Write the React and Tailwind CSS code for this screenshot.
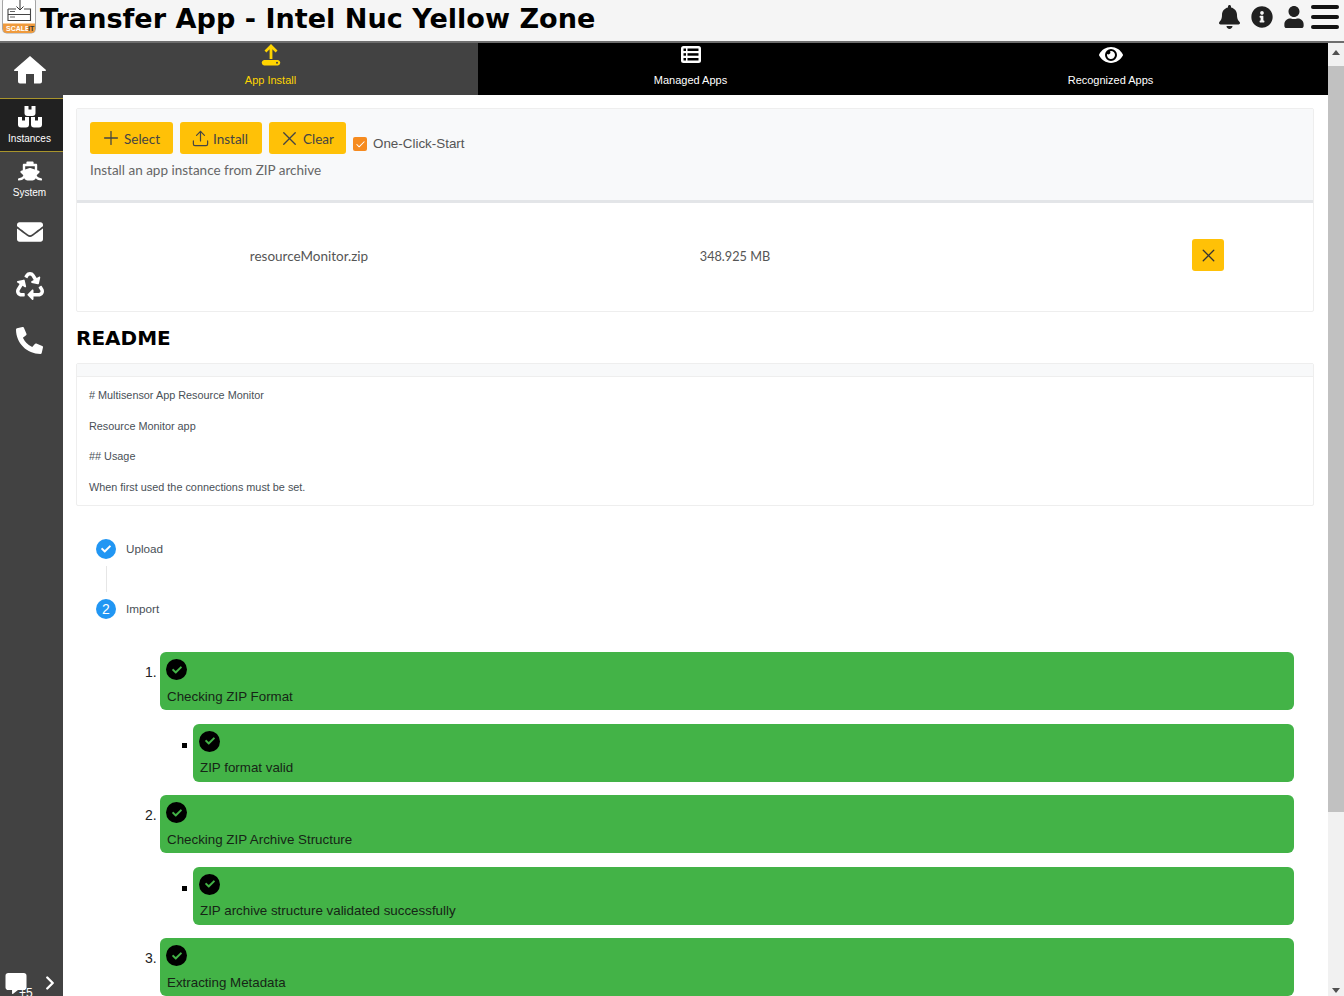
import React from "react";
import { FaShip, FaEnvelope, FaRecycle, FaPhoneAlt, FaBell, FaInfoCircle, FaUser, FaEye, FaCommentAlt, FaCheck } from "react-icons/fa";
import { Plus, Upload, X, ChevronRight, Check } from "lucide-react";

function Logo() {
  return (
    <svg width="34" height="34" viewBox="0 0 34 34" className="shrink-0">
      <rect x="0.5" y="-3" width="33" height="36" rx="4" fill="#fff" stroke="#a5a5a5" />
      <path d="M1 23.500h32V29a4 4 0 0 1-4 4H5a4 4 0 0 1-4-4z" fill="#ef9a3c" />
      <text x="4" y="31" fontSize="7" fontWeight="700" fill="#fff" fontFamily="Liberation Sans">SCALE</text>
      <text x="26" y="31" fontSize="7" fontWeight="700" fill="#333" fontFamily="Liberation Sans">IT</text>
      <path d="M18 0v9.500M14.500 6.500l3.500 3.500 3.500-3.500" fill="none" stroke="#333" strokeWidth="1" />
      <path d="M6 9h8M22 9h6.500v11.500H6V9M6 14.500h22.500" fill="none" stroke="#444" strokeWidth="1.100" />
      <rect x="8" y="11" width="5" height="1" fill="#666" />
      <rect x="8" y="16.500" width="5" height="1" fill="#666" />
    </svg>
  );
}

function TabUpload() {
  return (
    <svg width="20" height="22" viewBox="0 0 20 22" fill="#ffd400">
      <path d="M10 0l6.500 6.500-1.900 1.900-3.200-3.200V15H8.600V5.200L5.400 8.400 3.500 6.500z" />
      <path d="M3 16h14a2.800 2.800 0 0 1 0 5.500H3A2.800 2.800 0 0 1 3 16z" />
      <circle cx="16" cy="18.700" r="1" fill="#424242" />
    </svg>
  );
}

function HomeIcon() {
  return (
    <svg width="32" height="28" viewBox="0 0 32 28" fill="#fff">
      <path d="M16 0 31.500 13.500a.8.8 0 0 1-.5 1.500H28V25.500a2 2 0 0 1-2 2H20V18H12v9.500H6a2 2 0 0 1-2-2V15H1a.8.8 0 0 1-.5-1.500z" />
    </svg>
  );
}

function BoxesIcon() {
  const box = (x, y, w, h) => (
    <g key={x + "-" + y}>
      <path d={`M${x} ${y}h${w}v${h - 3}a3 3 0 0 1-3 3h-${w - 6}a3 3 0 0 1-3-3z`} fill="#fff" />
      <rect x={x + w / 2 - 1.500} y={y} width="3" height="3.500" fill="#212121" />
    </g>
  );
  return (
    <svg width="24" height="22" viewBox="0 0 24 22">
      {box(6.500, 0, 11, 10)}
      {box(0, 11, 11, 10.500)}
      {box(13, 11, 11, 10.500)}
    </svg>
  );
}

function ListIcon() {
  return (
    <svg width="20" height="18" viewBox="0 0 20 18">
      <rect width="20" height="17" rx="2.500" fill="#fff" />
      <rect x="2.500" y="2.500" width="2.500" height="2.500" fill="#000" />
      <rect x="2.500" y="7.200" width="2.500" height="2.500" fill="#000" />
      <rect x="2.500" y="12" width="2.500" height="2.500" fill="#000" />
      <rect x="6.500" y="2.500" width="11" height="2.500" fill="#000" />
      <rect x="6.500" y="7.200" width="11" height="2.500" fill="#000" />
      <rect x="6.500" y="12" width="11" height="2.500" fill="#000" />
    </svg>
  );
}

function NavItem({ icon, label, active, lift }) {
  return (
    <div className={"h-[54px] pr-[4px] flex flex-col items-center justify-center text-white " + (lift ? "pb-[2px] " : "") + (active ? "bg-[#212121] border-y border-[#a8942c]" : "")}>
      {icon}
      {label && <span className="text-[10px] leading-[13px] mt-[4px]">{label}</span>}
    </div>
  );
}

function Result({ label, sub, mark }) {
  return (
    <div className={"relative h-[58px] rounded-[6px] bg-[#43b347] " + (sub ? "ml-[33px]" : "")}>
      {sub ? (
        <span className="absolute -left-[11px] top-[19px] h-[5px] w-[5px] bg-black" />
      ) : (
        <span className="absolute -left-[15px] top-[12px] text-[14px] leading-[16px] text-[#222]">{mark}</span>
      )}
      <div className="pl-[6px] pt-[7px]">
        <div className="h-[21px] w-[21px] rounded-full bg-black flex items-center justify-center">
          <FaCheck className="text-[#43b347] w-[10px] h-[10px]" />
        </div>
      </div>
      <div className="pl-[7px] pt-[7.500px] text-[13.350px] leading-[17px] text-[#162516]">{label}</div>
    </div>
  );
}

function Btn({ icon, label, w, pl, gap }) {
  return (
    <div className={"h-[32px] rounded-[3px] bg-[#ffc107] flex items-center text-[13.500px] text-[#444] font-['Lato',sans-serif] " + w + " " + pl}>
      {icon}
      <span className={"pt-[2px] " + gap}>{label}</span>
    </div>
  );
}

export default function App() {
  return (
    <div className="w-[1344px] h-[996px] overflow-hidden flex flex-col bg-white font-['Liberation_Sans',Arial,sans-serif]">
      <header className="h-[43px] shrink-0 bg-[#f5f5f5] border-b-2 border-[#6e6e6e] flex items-start pl-[2px] pr-[5px]">
        <Logo />
        <h1 className="ml-[4px] text-[27.100px] leading-[38px] font-bold text-black font-['DejaVu_Sans',sans-serif] whitespace-nowrap">Transfer App - Intel Nuc Yellow Zone</h1>
        <div className="ml-auto flex items-center h-[34px] text-[#212121]">
          <FaBell className="w-[21px] h-[24px]" />
          <FaInfoCircle className="w-[22px] h-[22px] ml-[11px]" />
          <FaUser className="w-[20px] h-[22px] ml-[11px]" />
          <div className="ml-[7px] w-[28px] flex flex-col gap-[6px]">
            <div className="h-[4px] rounded-full bg-[#111]" />
            <div className="h-[4px] rounded-full bg-[#111]" />
            <div className="h-[4px] rounded-full bg-[#111]" />
          </div>
        </div>
      </header>

      <div className="flex-1 flex min-h-0">
        <aside className="relative w-[63px] shrink-0 bg-[#424242] flex flex-col">
          <div className="h-[55px] pr-[4px] pb-[1px] flex items-center justify-center"><HomeIcon /></div>
          <NavItem active icon={<BoxesIcon />} label="Instances" />
          <NavItem icon={<FaShip className="w-[24px] h-[22px]" />} label="System" />
          <NavItem lift icon={<FaEnvelope className="w-[28px] h-[26px]" />} />
          <NavItem lift icon={<FaRecycle className="w-[28px] h-[28px]" />} />
          <NavItem lift icon={<FaPhoneAlt className="w-[27px] h-[27px]" />} />
          <div className="absolute left-[5px] top-[930px] text-white"><FaCommentAlt className="w-[22px] h-[21px]" /></div>
          <span className="absolute left-[19px] top-[943px] text-[12px] leading-[14px] text-white">+5</span>
          <ChevronRight className="absolute left-[39px] top-[929px] w-[22px] h-[22px] text-white" strokeWidth={2.6} />
        </aside>

        <main className="flex-1 min-w-0 overflow-hidden">
          <nav className="h-[52px] flex text-[11px] leading-[13px]">
            <div className="w-[415px] bg-[#424242] text-[#ffd400] flex flex-col items-center pt-[1px]">
              <TabUpload />
              <span className="mt-[8px]">App Install</span>
            </div>
            <div className="w-[425px] bg-black text-white flex flex-col items-center pt-[3px]">
              <ListIcon />
              <span className="mt-[10px]">Managed Apps</span>
            </div>
            <div className="flex-1 pr-[10px] bg-black text-white flex flex-col items-center pt-[1px]">
              <FaEye className="w-[24px] h-[22px]" />
              <span className="mt-[8px]">Recognized Apps</span>
            </div>
          </nav>

          <div className="pl-[13px] pr-[14px] pt-[13px]">
            <section className="border border-[#eeeeee] rounded-[2px]">
              <div className="h-[94px] bg-[#f8f9fa] border-b-[3px] border-[#e3e5e8] px-[13px] pt-[13px]">
                <div className="flex items-start gap-[7px]">
                  <Btn w="w-[83px]" pl="pl-[10px]" gap="ml-[2px]" label="Select" icon={<Plus className="w-[22px] h-[22px]" strokeWidth={1.4} />} />
                  <Btn w="w-[82px]" pl="pl-[11px]" gap="ml-[3px]" label="Install" icon={<Upload className="w-[19px] h-[19px]" strokeWidth={1.5} />} />
                  <Btn w="w-[77px]" pl="pl-[9px]" gap="ml-[2px]" label="Clear" icon={<X className="w-[23px] h-[23px]" strokeWidth={1.4} />} />
                  <div className="flex items-center h-[14px] mt-[15px]">
                    <div className="h-[14px] w-[14px] rounded-[2px] bg-[#f68b1f] flex items-center justify-center">
                      <Check className="w-[11px] h-[11px] text-white" strokeWidth={2.2} />
                    </div>
                    <span className="ml-[6px] text-[13.400px] text-[#555]">One-Click-Start</span>
                  </div>
                </div>
                <p className="mt-[7px] text-[13.500px] leading-[19px] text-[#666] font-['Lato',sans-serif]">Install an app instance from ZIP archive</p>
              </div>
              <div className="h-[108px] flex items-start pt-[36px] pl-[13px] text-[13.500px] text-[#555] font-['Lato',sans-serif]">
                <div className="w-[438px] text-center pt-[8px] leading-[19px]">resourceMonitor.zip</div>
                <div className="w-[414px] text-center pt-[8px] leading-[19px] text-[12.700px]">348.925 MB</div>
                <div className="ml-[250px] h-[32px] w-[32px] rounded-[3px] bg-[#ffc107] flex items-center justify-center text-[#333]">
                  <X className="w-[21px] h-[21px]" strokeWidth={1.5} />
                </div>
              </div>
            </section>

            <h2 className="mt-[14px] text-[20px] leading-[24px] font-bold text-black font-['DejaVu_Sans',sans-serif]">README</h2>

            <section className="mt-[13px] h-[143px] border border-[#eeeeee] rounded-[2px] text-[10.850px] text-[#495057]">
              <div className="h-[13px] bg-[#f8f9fa] border-b border-[#eeeeee]" />
              <div className="pl-[12px] pt-[11px] flex flex-col gap-[15.700px] leading-[15px]">
                <p># Multisensor App Resource Monitor</p>
                <p>Resource Monitor app</p>
                <p>## Usage</p>
                <p>When first used the connections must be set.</p>
              </div>
            </section>

            <div className="pl-[20px] pt-[33px] text-[11.700px] text-[#495057]">
              <div className="flex items-center h-[20px]">
                <div className="h-[20px] w-[20px] rounded-full bg-[#2196f3] flex items-center justify-center">
                  <FaCheck className="w-[10px] h-[10px] text-white" />
                </div>
                <span className="ml-[10px]">Upload</span>
              </div>
              <div className="ml-[9.500px] my-[7px] w-px h-[26px] bg-[#e6e6e6]" />
              <div className="flex items-center h-[20px]">
                <div className="h-[20px] w-[20px] rounded-full bg-[#2196f3] flex items-center justify-center text-white text-[14px]">2</div>
                <span className="ml-[10px]">Import</span>
              </div>
            </div>

            <div className="ml-[84px] mr-[20px] mt-[33px] flex flex-col gap-[13.500px]">
              <Result mark="1." label="Checking ZIP Format" />
              <Result sub label="ZIP format valid" />
              <Result mark="2." label="Checking ZIP Archive Structure" />
              <Result sub label="ZIP archive structure validated successfully" />
              <Result mark="3." label="Extracting Metadata" />
            </div>
          </div>
        </main>

        <div className="w-[16px] shrink-0 bg-[#f1f1f1] flex flex-col items-center">
          <div className="h-[23px] shrink-0 flex items-start justify-center pt-[7px]">
            <div className="h-0 w-0 border-x-[4px] border-x-transparent border-b-[5px] border-b-[#505050]" />
          </div>
          <div className="h-[746px] w-full bg-[#c1c1c1]" />
          <div className="flex-1" />
          <div className="h-[13px] shrink-0 flex items-end justify-center pb-[3px]">
            <div className="h-0 w-0 border-x-[4px] border-x-transparent border-t-[5px] border-t-[#505050]" />
          </div>
        </div>
      </div>
    </div>
  );
}
